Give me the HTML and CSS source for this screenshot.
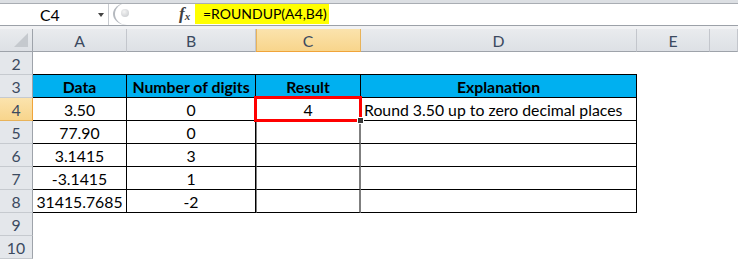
FILE: index.html
```html
<!DOCTYPE html>
<html>
<head>
<meta charset="utf-8">
<link rel="stylesheet" href="styles.css">
</head>
<body>
<div class="app">
  <div class="topband"></div>
  <div class="fbar">
    <div class="namebox">
      <span class="nb-text">C4</span>
      <span class="nb-arrow"></span>
    </div>
    <div class="fctrl">
      <span class="knob"><span class="dot"></span></span>
      <span class="fx">f<sub>x</sub></span>
    </div>
    <div class="formula"><span class="hl">=ROUNDUP(A4,B4)</span></div>
  </div>
  <div class="sep"></div>
  <div class="grid">
    <div class="ch corner"><span class="tri"></span></div>
    <div class="ch">A</div>
    <div class="ch">B</div>
    <div class="ch sel">C</div>
    <div class="ch">D</div>
    <div class="ch">E</div>
    <div class="ch last"></div>

    <div class="rh">2</div>
    <div class="c tb-top"></div><div class="c tb-top"></div><div class="c tb-top"></div><div class="c tb-top"></div><div class="c"></div><div class="c"></div>

    <div class="rh">3</div>
    <div class="c t hd">Data</div><div class="c t hd">Number of digits</div><div class="c t hd">Result</div><div class="c t hd">Explanation</div><div class="c"></div><div class="c"></div>

    <div class="rh sel">4</div>
    <div class="c t">3.50</div><div class="c t">0</div><div class="c t rc">4<span class="selbox"></span><span class="handle"></span></div><div class="c t left">Round 3.50 up to zero decimal places</div><div class="c"></div><div class="c"></div>

    <div class="rh">5</div>
    <div class="c t">77.90</div><div class="c t">0</div><div class="c t g"></div><div class="c t"></div><div class="c"></div><div class="c"></div>

    <div class="rh">6</div>
    <div class="c t">3.1415</div><div class="c t">3</div><div class="c t g"></div><div class="c t"></div><div class="c"></div><div class="c"></div>

    <div class="rh">7</div>
    <div class="c t">-3.1415</div><div class="c t">1</div><div class="c t g"></div><div class="c t"></div><div class="c"></div><div class="c"></div>

    <div class="rh">8</div>
    <div class="c t">31415.7685</div><div class="c t">-2</div><div class="c t g"></div><div class="c t"></div><div class="c"></div><div class="c"></div>

    <div class="rh">9</div>
    <div class="c"></div><div class="c"></div><div class="c"></div><div class="c"></div><div class="c"></div><div class="c"></div>

    <div class="rh">10</div>
    <div class="c"></div><div class="c"></div><div class="c"></div><div class="c"></div><div class="c"></div><div class="c"></div>
  </div>
</div>
</body>
</html>
```

FILE: styles.css
```css
html, body {
  margin: 0;
  padding: 0;
  background: #ffffff;
}
.app {
  width: 738px;
  height: 259px;
  overflow: hidden;
  font-family: "Lato", "Open Sans", sans-serif;
  font-size: 15.8px;
  color: #000;
}
.topband {
  height: 3px;
  background: #dcdfe3;
  border-bottom: 1px solid #a9adb3;
}
.fbar {
  display: flex;
  height: 21px;
  background: #ffffff;
  border-bottom: 1px solid #9ca1a8;
}
.namebox {
  width: 108px;
  position: relative;
  display: flex;
  align-items: center;
  border-right: 1px solid #c8cbd0;
}
.nb-text {
  margin-left: 40px;
  color: #000;
}
.nb-arrow {
  position: absolute;
  left: 98px;
  top: 9px;
  width: 0;
  height: 0;
  border-left: 3.5px solid transparent;
  border-right: 3.5px solid transparent;
  border-top: 4px solid #444;
}
.fctrl {
  width: 86px;
  display: flex;
  align-items: center;
  position: relative;
}
.knob {
  position: absolute;
  left: 4px;
  top: -1px;
  width: 28px;
  height: 22px;
  border-radius: 50%;
  border-left: 2px solid #b5b9bf;
  box-sizing: border-box;
}
.dot {
  position: absolute;
  left: 6px;
  top: 6px;
  width: 8px;
  height: 8px;
  border-radius: 50%;
  background: radial-gradient(circle at 40% 35%, #f4f4f4, #c3c6ca);
}
.fx {
  position: absolute;
  left: 70px;
  top: 0px;
  font-family: "Liberation Serif", serif;
  font-style: italic;
  font-weight: bold;
  font-size: 17px;
  color: #404040;
}
.fx sub {
  font-size: 11px;
  vertical-align: -1px;
}
.formula {
  flex: 1;
  display: flex;
  align-items: stretch;
}
.hl {
  background: #ffff00;
  box-sizing: border-box;
  width: 134px;
  padding: 0 0 0 8px;
  font-size: 14px;
  white-space: nowrap;
  line-height: 20px;
  height: 20px;
}
.sep {
  height: 3px;
  background: #f1f2f4;
}
.grid {
  display: grid;
  grid-template-columns: 33px 94px 129px 105px 276px 73px 1fr;
  grid-auto-rows: 23px;
}
.ch {
  background: linear-gradient(#e9ebee, #dde0e5);
  border-right: 1px solid #c3c6cc;
  border-bottom: 1px solid #9ea3aa;
  box-sizing: border-box;
  display: flex;
  align-items: center;
  justify-content: center;
  color: #3b4a60;
}
.ch.sel {
  background: linear-gradient(#fbe3ad, #f8d58c);
  border-right: 1px solid #e8b35a;
  border-bottom: 1px solid #f0a43a;
  box-shadow: inset 1px 0 0 #e8b35a;
}
.corner {
  position: relative;
  border-right: 1px solid #9ea3aa;
}
.tri {
  position: absolute;
  right: 4px;
  bottom: 4px;
  width: 0;
  height: 0;
  border-left: 14px solid transparent;
  border-bottom: 14px solid #c5c9ce;
}
.rh {
  background: #e4e7eb;
  border-right: 1px solid #9ea3aa;
  border-bottom: 1px solid #c6cacf;
  box-sizing: border-box;
  display: flex;
  align-items: center;
  justify-content: center;
  color: #3b4a60;
}
.rh.sel {
  background: linear-gradient(#fbe3ad, #f8d58c);
  border-right: 1px solid #f0a43a;
  border-bottom: 1px solid #e8b35a;
}
.c {
  box-sizing: border-box;
  display: flex;
  align-items: center;
  justify-content: center;
  white-space: nowrap;
}
.tb-top {
  border-bottom: 1px solid #000;
}
.t {
  border-right: 1px solid #000;
  border-bottom: 1px solid #000;
  padding-top: 1px;
}
.hd {
  background: #00b0f0;
  font-weight: bold;
}
.left {
  justify-content: flex-start;
  padding-left: 3px;
}
.g {
  border-left: 1px solid #7f7f7f;
  border-right: 2px solid #7f7f7f;
}
.rc {
  position: relative;
}
.selbox {
  position: absolute;
  left: -2px;
  top: -2px;
  right: -2px;
  bottom: -2px;
  border: 3px solid #ff0000;
}
.handle {
  position: absolute;
  right: -4px;
  bottom: -4px;
  width: 5px;
  height: 5px;
  background: #3a3a3a;
  border: 1px solid #fff;
}
```
